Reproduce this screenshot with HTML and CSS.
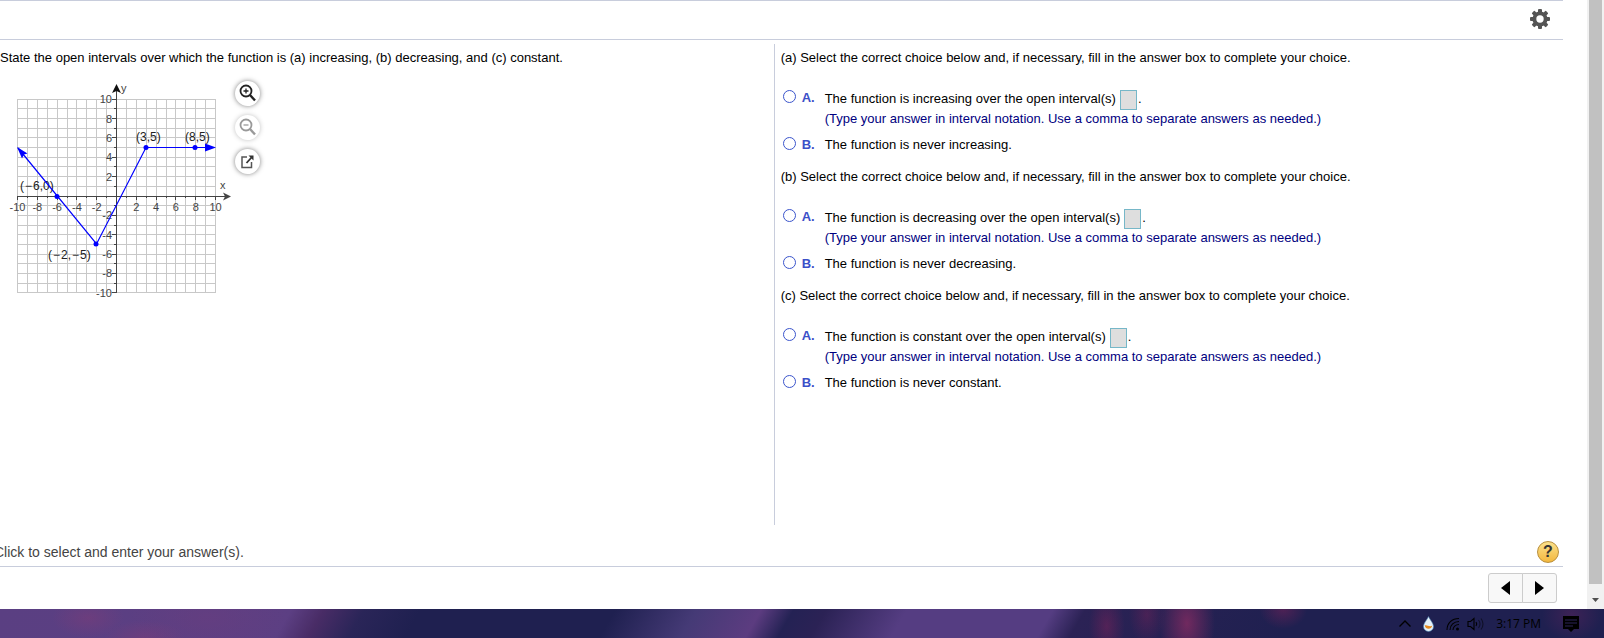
FILE: index.html
```html
<!DOCTYPE html>
<html lang="en">
<head>
    <meta charset="UTF-8">
    <meta name="viewport" content="width=device-width, initial-scale=1.0">
    <title>Homework</title>
    <link rel="stylesheet" href="styles.css">
</head>
<body>
    <div class="window">
        <div class="page">
            <header class="toolbar">
                <button type="button" class="icon-btn" aria-label="Settings">
                    <svg width="20" height="20" viewBox="0 0 20 20">
                        <g fill="#555">
                            <rect x="8" y="0" width="4" height="20" rx="1"/>
                            <rect x="8" y="0" width="4" height="20" rx="1" transform="rotate(45 10 10)"/>
                            <rect x="8" y="0" width="4" height="20" rx="1" transform="rotate(90 10 10)"/>
                            <rect x="8" y="0" width="4" height="20" rx="1" transform="rotate(135 10 10)"/>
                            <circle cx="10" cy="10" r="7.6"/>
                        </g>
                        <circle cx="10" cy="10" r="3.7" fill="#fff"/>
                    </svg>
                </button>
            </header>

            <main class="content">
                <!-- Question -->
                <section class="question">
                    <p>State the open intervals over which the function is (a) increasing, (b) decreasing, and (c) constant.</p>
                    <div class="figure">
                        <svg class="graph" id="graph" width="235" height="220" viewBox="0 80 235 220" role="img" aria-label="Graph of the function">
                            <g id="grid" stroke="#c8c8c8" shape-rendering="crispEdges"></g>
                            <g id="ticks" stroke="#444" shape-rendering="crispEdges"></g>
                            <path d="M116.500 292V88M18 196.500H226" stroke="#444" fill="none"/>
                            <path d="M116.500 84l4.500 9-4.500-2-4.500 2z" fill="#111"/>
                            <path d="M231 196.500l-8-4 2 4-2 4z" fill="#444"/>
                            <g id="labels" font-size="11" fill="#444"></g>
                            <text x="121" y="92" font-size="11" fill="#444">y</text>
                            <text x="220" y="189" font-size="11" fill="#444">x</text>
                            <g font-size="12" fill="#222">
                                <text x="136" y="141">(3,5)</text>
                                <text x="185" y="141">(8,5)</text>
                                <text x="20" y="190">(&#8202;−&#8202;6,0)</text>
                                <text x="48" y="259">(&#8202;−&#8202;2,&#8202;−&#8202;5)</text>
                            </g>
                            <g fill="#00f">
                                <path d="M18 148L96.500 244L146 147.500H214" fill="none" stroke="#00f" stroke-width="1.200"/>
                                <path d="M17 147l10.500 6.500-3.500 1-2 4z"/>
                                <path d="M216 147.500l-11-4v8z"/>
                                <circle cx="57" cy="196.500" r="2.500"/>
                                <circle cx="96" cy="244" r="2.500"/>
                                <circle cx="146" cy="147.500" r="2.500"/>
                                <circle cx="195" cy="147.500" r="2.500"/>
                            </g>
                        </svg>
                        <div class="tools">
                            <button type="button" class="round" aria-label="Zoom in">
                                <svg width="25" height="25" viewBox="0 0 25 25" fill="none" stroke="#222">
                                    <circle cx="11" cy="10" r="5.500" stroke-width="1.800"/>
                                    <path d="M11 7.500v5M8.500 10h5" stroke-width="1.300"/>
                                    <path d="M15 14l5 5.500" stroke-width="2.400"/>
                                </svg>
                            </button>
                            <button type="button" class="round faded" aria-label="Zoom out">
                                <svg width="25" height="25" viewBox="0 0 25 25" fill="none" stroke="#999">
                                    <circle cx="11" cy="10" r="5.500" stroke-width="1.800"/>
                                    <path d="M8.500 10h5" stroke-width="1.300"/>
                                    <path d="M15 14l5 5.500" stroke-width="2.400"/>
                                </svg>
                            </button>
                            <button type="button" class="round" aria-label="Open in new window">
                                <svg width="25" height="25" viewBox="0 0 25 25" fill="none" stroke="#555" stroke-width="1.500">
                                    <path d="M12 8H7v10.500h9.500V13"/>
                                    <path d="M11.500 14l5-5.500" stroke="#333" stroke-width="1.800"/>
                                    <path d="M13.500 6.500h5v5z" fill="#333" stroke="none"/>
                                </svg>
                            </button>
                        </div>
                    </div>
                </section>

                <!-- Answers -->
                <section class="answers">
                    <fieldset>
                        <legend>(a) Select the correct choice below and, if necessary, fill in the answer box to complete your choice.</legend>
                        <div class="choice">
                            <input type="radio" name="a" id="a1">
                            <label class="letter" for="a1">A.</label>
                            <div>
                                <div class="line"><label for="a-box">The function is increasing over the open interval(s)</label> <input type="text" class="box" id="a-box">.</div>
                                <div class="hint">(Type your answer in interval notation. Use a comma to separate answers as needed.)</div>
                            </div>
                        </div>
                        <div class="choice">
                            <input type="radio" name="a" id="a2">
                            <label class="letter" for="a2">B.</label>
                            <label for="a2">The function is never increasing.</label>
                        </div>
                    </fieldset>
                    <fieldset>
                        <legend>(b) Select the correct choice below and, if necessary, fill in the answer box to complete your choice.</legend>
                        <div class="choice">
                            <input type="radio" name="b" id="b1">
                            <label class="letter" for="b1">A.</label>
                            <div>
                                <div class="line"><label for="b-box">The function is decreasing over the open interval(s)</label> <input type="text" class="box" id="b-box">.</div>
                                <div class="hint">(Type your answer in interval notation. Use a comma to separate answers as needed.)</div>
                            </div>
                        </div>
                        <div class="choice">
                            <input type="radio" name="b" id="b2">
                            <label class="letter" for="b2">B.</label>
                            <label for="b2">The function is never decreasing.</label>
                        </div>
                    </fieldset>
                    <fieldset>
                        <legend>(c) Select the correct choice below and, if necessary, fill in the answer box to complete your choice.</legend>
                        <div class="choice">
                            <input type="radio" name="c" id="c1">
                            <label class="letter" for="c1">A.</label>
                            <div>
                                <div class="line"><label for="c-box">The function is constant over the open interval(s)</label> <input type="text" class="box" id="c-box">.</div>
                                <div class="hint">(Type your answer in interval notation. Use a comma to separate answers as needed.)</div>
                            </div>
                        </div>
                        <div class="choice">
                            <input type="radio" name="c" id="c2">
                            <label class="letter" for="c2">B.</label>
                            <label for="c2">The function is never constant.</label>
                        </div>
                    </fieldset>
                </section>
            </main>

            <div class="status">
                <span>Click to select and enter your answer(s).</span>
                <button type="button" class="help">?</button>
            </div>
            <nav class="pager">
                <button type="button" aria-label="Previous"><svg width="9" height="14" viewBox="0 0 9 14"><path d="M9 0v14L0 7z"/></svg></button>
                <button type="button" aria-label="Next"><svg width="9" height="14" viewBox="0 0 9 14"><path d="M0 0v14l9-7z"/></svg></button>
            </nav>
        </div>

        <div class="scrollbar">
            <div class="thumb"></div>
            <svg width="7" height="4" viewBox="0 0 7 4"><path d="M0 0h7L3.500 4z" fill="#505050"/></svg>
        </div>
    </div>

    <footer class="taskbar">
        <svg width="12" height="7" viewBox="0 0 12 7" fill="none" stroke="#000" stroke-width="1.400"><path d="M0.500 6.500L6 1l5.500 5.500"/></svg>
        <svg width="11" height="16" viewBox="0 0 11 16">
            <path d="M5.500 0.500C7 4 10.500 7 10.500 10.500a5 5 0 0 1-10 0C0.500 7 4 4 5.500 0.500z" fill="#e4f1f8" stroke="#4b7fae" stroke-width="0.600"/>
            <path d="M1.800 9.500c2-1 4 1.500 7.400 0.300a3.800 3.800 0 0 1-7.400 0z" fill="#e58a1f"/>
        </svg>
        <div class="tray">
            <svg width="14" height="14" viewBox="0 0 14 14" fill="none" stroke="#000" stroke-width="1.100">
                <path d="M1 13C1 6 6 1.500 13 1.500M4 13c0-5 4-8.500 9-8.500M7 13c0-3 2.500-5.500 6-5.500"/>
                <circle cx="11.500" cy="12" r="1.500" fill="#000" stroke="none"/>
            </svg>
            <svg width="17" height="14" viewBox="0 0 17 14" fill="none" stroke="#000" stroke-width="1.100">
                <path d="M1 4.500h2.500L7 1.500v11L3.500 9.500H1z"/>
                <path d="M9 5q1.500 2 0 4"/>
                <path d="M11.500 3q3 4 0 8M14 1.500q4 5.500 0 11" opacity=".5"/>
            </svg>
        </div>
        <time>3:17 PM</time>
        <svg class="notice" width="16" height="16" viewBox="0 0 16 16">
            <path d="M0 0h16v13h-5l-3 3-3-3H0z"/>
            <path d="M2 4h12M2 7h12M2 10h8" stroke="#2c2458"/>
        </svg>
    </footer>

    <script>
        const ns = 'http://www.w3.org/2000/svg';

        // graph units to svg units
        const px = x => 116.5 + x * 9.9;
        const py = y => 196 - y * 9.67;

        function line(group, x1, y1, x2, y2) {
            const el = document.createElementNS(ns, 'line');
            el.setAttribute('x1', x1);
            el.setAttribute('y1', y1);
            el.setAttribute('x2', x2);
            el.setAttribute('y2', y2);
            document.getElementById(group).appendChild(el);
        }

        function label(text, x, y, anchor) {
            const el = document.createElementNS(ns, 'text');
            el.setAttribute('x', x);
            el.setAttribute('y', y);
            el.setAttribute('text-anchor', anchor);
            el.textContent = text;
            document.getElementById('labels').appendChild(el);
        }

        for (let i = -10; i <= 10; i++) {
            line('grid', px(i), py(10), px(i), py(-10));
            line('grid', px(-10), py(i), px(10), py(i));
            if (i === 0) continue;
            const len = i % 2 === 0 ? 5 : 3;
            line('ticks', px(i), py(0), px(i), py(0) + len - 1);
            line('ticks', px(0) - len, py(i), px(0), py(i));
            if (i % 2 === 0) {
                label(i, px(i), 211, 'middle');
                label(i, 112, py(i) + 4, 'end');
            }
        }
    </script>
</body>
</html>
```
FILE: styles.css
```css
* { box-sizing: border-box; }

body {
    margin: 0;
    min-height: 100vh;
    display: flex;
    flex-direction: column;
    background: #fff;
    color: #000;
    font-family: "Liberation Sans", Arial, sans-serif;
    font-size: 13px;
    line-height: 15px;
    overflow: hidden;
}

p { margin: 0; }

button {
    padding: 0;
    font-family: inherit;
    cursor: pointer;
}

svg { display: block; }

.window {
    flex: 1;
    display: flex;
}

.page {
    flex: 1;
    display: flex;
    flex-direction: column;
    padding-right: 24px;
}

.toolbar {
    height: 40px;
    display: flex;
    align-items: center;
    justify-content: flex-end;
    padding: 0 13px 2px 0;
    border-top: 1px solid #c8cddc;
    border-bottom: 1px solid #c8cddc;
}

.icon-btn {
    border: none;
    background: none;
}

/* Question and answers */
.content {
    flex: 1;
    display: flex;
    padding-top: 4px;
}

.question {
    flex: 0 0 49.5%;
    padding-top: 6px;
}

.figure {
    display: flex;
    margin-top: 15px;
}

.tools {
    display: flex;
    flex-direction: column;
    gap: 9px;
    padding-top: 1px;
}

.round {
    width: 25px;
    height: 25px;
    border: none;
    border-radius: 50%;
    background: #fff;
    box-shadow: 0 0 5px rgba(0, 0, 0, 0.5);
}

.faded { box-shadow: 0 0 5px rgba(0, 0, 0, 0.25); }

.answers {
    flex: 1;
    padding: 6px 0 0 6px;
    border-left: 1px solid #c8cddc;
}

fieldset {
    margin: 0 0 17px;
    padding: 0;
    border: none;
}

legend {
    padding: 0;
    margin-bottom: 25px;
}

.choice {
    display: grid;
    grid-template-columns: 20px 23px 1fr;
    align-items: start;
    margin-bottom: 10px;
    padding-left: 1px;
}

.choice:last-child { margin-bottom: 0; }

.choice input[type="radio"] {
    appearance: none;
    width: 13px;
    height: 13px;
    margin: 0 1px;
    border: 1px solid #3b55cc;
    border-radius: 50%;
    background: #fff;
}

.letter {
    color: #3b4fc8;
    font-weight: bold;
}

.line {
    display: flex;
    align-items: flex-start;
    height: 20px;
    line-height: 18px;
}

.box {
    width: 17px;
    height: 20px;
    margin: 0 1px 0 4px;
    padding: 0;
    border: 1px solid #76b7c8;
    background: #dedede;
}

.hint {
    color: #000080;
    line-height: 17px;
}

/* Bottom bars */
.status {
    height: 42px;
    display: flex;
    align-items: center;
    justify-content: space-between;
    margin-left: -6px;
    padding: 13px 4px 0 0;
    border-bottom: 1px solid #c8cddc;
    color: #444;
    font-size: 14px;
}

.help {
    width: 22px;
    height: 22px;
    border: 1px solid #b98f3c;
    border-radius: 50%;
    background: linear-gradient(#fbe08a, #f3b83f);
    color: #333;
    font-size: 16px;
    font-weight: bold;
    line-height: 20px;
}

.pager {
    height: 42px;
    display: flex;
    justify-content: flex-end;
    padding: 6px 6px 6px 0;
}

.pager button {
    width: 35px;
    display: flex;
    align-items: center;
    justify-content: center;
    border: 1px solid #ccc;
    border-radius: 3px 0 0 3px;
    background: #f8f8f8;
}

.pager button + button {
    margin-left: -1px;
    border-radius: 0 3px 3px 0;
}

.scrollbar {
    width: 17px;
    display: flex;
    flex-direction: column;
    align-items: center;
    gap: 14px;
    padding-bottom: 7px;
    background: #f1f1f1;
}

.thumb {
    flex: 1;
    width: 13px;
    background: #c1c1c1;
}

.taskbar {
    height: 29px;
    display: flex;
    align-items: center;
    justify-content: flex-end;
    gap: 12px;
    padding-right: 25px;
    font-family: "Open Sans", "Noto Sans", sans-serif;
    font-size: 12px;
    background:
        radial-gradient(ellipse 36px 20px at 5.5% 30%, rgba(125, 60, 120, 0.5), transparent),
        radial-gradient(ellipse 40px 18px at 9% 100%, rgba(125, 60, 120, 0.5), transparent),
        radial-gradient(ellipse 80px 40px at 13% 30%, rgba(110, 60, 125, 0.4), transparent),
        radial-gradient(ellipse 18px 34px at 69% 60%, rgba(125, 35, 90, 0.5), transparent),
        radial-gradient(ellipse 18px 30px at 71.5% 20%, rgba(125, 35, 90, 0.4), transparent),
        radial-gradient(ellipse 28px 50px at 74% 50%, rgba(145, 45, 100, 0.7), transparent),
        radial-gradient(ellipse 24px 20px at 80% 0%, rgba(125, 35, 90, 0.5), transparent),
        radial-gradient(ellipse 30px 26px at 98% 20%, rgba(80, 35, 90, 0.6), transparent),
        linear-gradient(120deg, #5a3f82 0%, #5c3f83 18%, #492c66 20%, #2a2558 22.5%, #1f2050 26%, #1f2050 38%, #453a76 43%, #5c3c80 47%, #242254 49%, #2b2255 51%, #553d82 56%, #553d82 65%, #2b2255 67%, #1f2050 80%, #1f2050 100%);
}

.tray {
    display: flex;
    gap: 7px;
}

.notice { margin-left: 10px; }
```
